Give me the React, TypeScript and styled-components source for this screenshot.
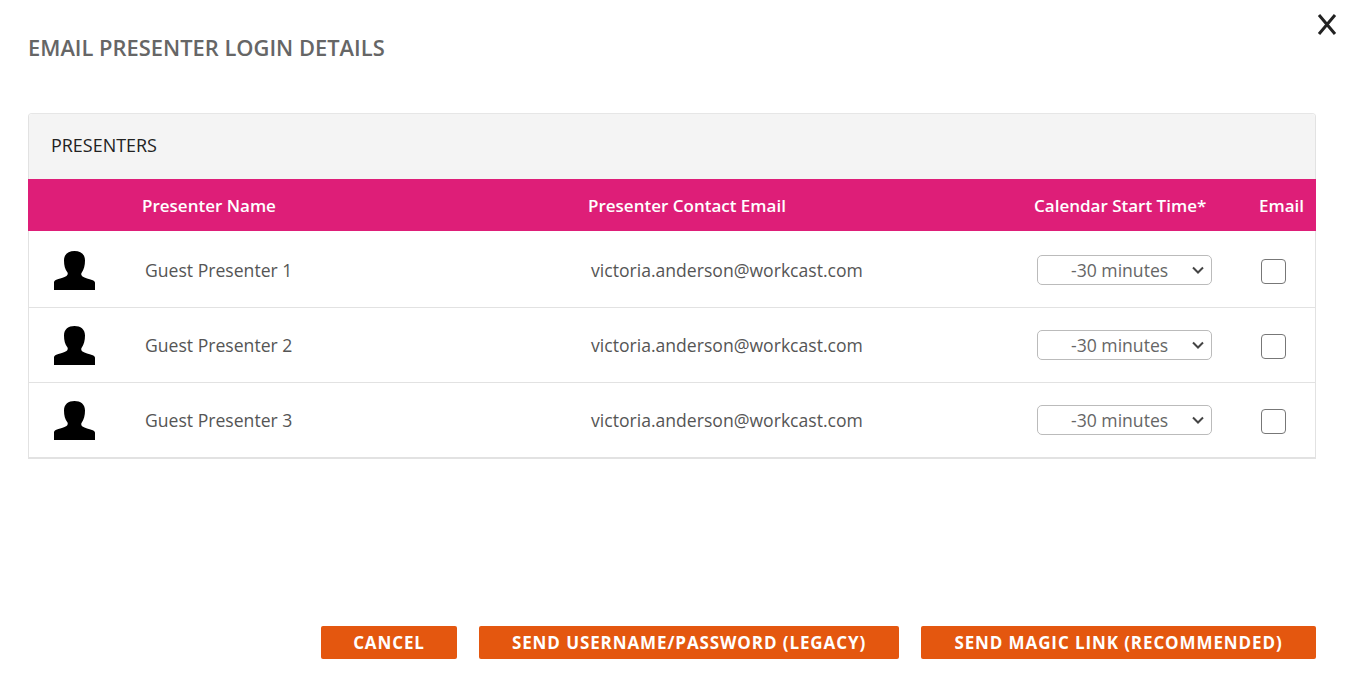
import React from "react";
import styled, { createGlobalStyle } from "styled-components";

const Global = createGlobalStyle`
  html, body { margin: 0; padding: 0; background: #fff; }
  body { font-family: "Open Sans", "Liberation Sans", sans-serif; overflow: hidden; }
  * { box-sizing: border-box; }
`;

const Page = styled.div`
  position: relative;
  width: 1347px;
  height: 675px;
  padding: 36px 31px 0 28px;
  display: flex;
  flex-direction: column;
`;

const Close = styled.svg`
  position: absolute;
  top: 14px;
  left: 1317px;
  width: 20px;
  height: 21px;
`;

const Title = styled.h1`
  margin: 0 0 52px;
  height: 25px;
  font-size: 21.9px;
  line-height: 23px;
  font-weight: 600;
  color: #666;
  white-space: nowrap;
`;

const Panel = styled.div`
  height: 346px;
  border: 1px solid #e2e2e2;
  border-top-color: #e6e6e6;
  border-bottom: 2px solid #e2e2e2;
  border-radius: 4px 4px 0 0;
  background: #fff;
`;

const PanelHead = styled.div`
  height: 65px;
  padding: 0 0 3px 22px;
  display: flex;
  align-items: center;
  background: #f4f4f4;
  border-radius: 4px 4px 0 0;
  font-size: 17.95px;
  font-weight: 500;
  color: #222;
`;

const HeadRow = styled.div`
  display: grid;
  grid-template-columns: 113px 446px 447px 225px 57px;
  height: 52px;
  margin: 0 -1px;
  padding-top: 1px;
  align-items: center;
  background: #de1e78;
  color: #fff;
  font-size: 17px;
  font-weight: 600;
  letter-spacing: 0;
`;

const HeadCell = styled.div`
  white-space: nowrap;
  &:nth-child(2), &:nth-child(3) { padding-left: 1px; }
`;

const Row = styled.div`
  display: grid;
  grid-template-columns: 113px 446px 447px 225px 55px;
  height: 75px;
  align-items: center;
  border-bottom: 1px solid #e2e2e2;
  &:nth-child(3) { height: 77px; padding-top: 2px; }
  &:last-child { border-bottom-color: transparent; }
`;

const Avatar = styled.svg`
  width: 41px;
  height: 39px;
  margin: 1px 0 0 25px;
`;

const Text = styled.div`
  font-size: 17.6px;
  color: #555;
  padding-left: 3px;
  white-space: nowrap;
`;

const Select = styled.div`
  position: relative;
  width: 175px;
  height: 30px;
  margin-left: 2px;
  border: 1px solid #bbb;
  border-radius: 5px;
  font-size: 17.6px;
  line-height: 28px;
  color: #666;
  padding-left: 33px;
  svg { position: absolute; top: 9px; right: 6px; }
`;

const Check = styled.span`
  display: block;
  width: 25px;
  height: 25px;
  margin: 3px 0 0 1px;
  border: 1.5px solid #777;
  border-radius: 4px;
  background: #fff;
`;

const Actions = styled.div`
  display: flex;
  justify-content: flex-end;
  gap: 22px;
  margin-top: 167px;
`;

const Button = styled.button<{ $w: number }>`
  width: ${(p) => p.$w}px;
  height: 33px;
  padding: 0;
  border: 0;
  border-radius: 2px;
  background: #e4570f;
  color: #fff;
  font-family: inherit;
  font-size: 17px;
  font-weight: 700;
  letter-spacing: 0.9px;
  text-transform: uppercase;
`;

const people = ["Guest Presenter 1", "Guest Presenter 2", "Guest Presenter 3"];

export default function App() {
  return (
    <Page>
      <Global />
      <Close viewBox="0 0 20 21">
        <path d="M2 1 L18 20 M18 1 L2 20" stroke="#222" strokeWidth="3" fill="none" />
      </Close>
      <Title>EMAIL PRESENTER LOGIN DETAILS</Title>
      <Panel>
        <PanelHead>PRESENTERS</PanelHead>
        <HeadRow>
          <HeadCell />
          <HeadCell>Presenter Name</HeadCell>
          <HeadCell>Presenter Contact Email</HeadCell>
          <HeadCell>Calendar Start Time*</HeadCell>
          <HeadCell>Email</HeadCell>
        </HeadRow>
        {people.map((name) => (
          <Row key={name}>
            <Avatar viewBox="0 0 41 39">
              <path
                fill="#000"
                d="M20.500 0c6 0 10.500 3 10.500 9.500 0 5-1 9-3.500 12.500-.5 1-.3 2.500 1 3.500 2 1.500 7 2.500 9.500 3.500 2 .8 3 1.500 3 3V39H0v-7.500c0-1.500 1-2.200 3-3 2.500-1 7.500-2 9.500-3.500 1.300-1 1.500-2.500 1-3.500C11 18.500 10 14.500 10 9.500 10 3 14.500 0 20.500 0z"
              />
            </Avatar>
            <Text>{name}</Text>
            <Text>victoria.anderson@workcast.com</Text>
            <Select>
              -30 minutes
              <svg width="14" height="10" viewBox="0 0 14 10">
                <path d="M2 2.500 L7 7.500 L12 2.500" stroke="#444" strokeWidth="2" fill="none" />
              </svg>
            </Select>
            <Check />
          </Row>
        ))}
      </Panel>
      <Actions>
        <Button $w={136}>Cancel</Button>
        <Button $w={420}>Send Username/Password (Legacy)</Button>
        <Button $w={395}>Send Magic Link (Recommended)</Button>
      </Actions>
    </Page>
  );
}
